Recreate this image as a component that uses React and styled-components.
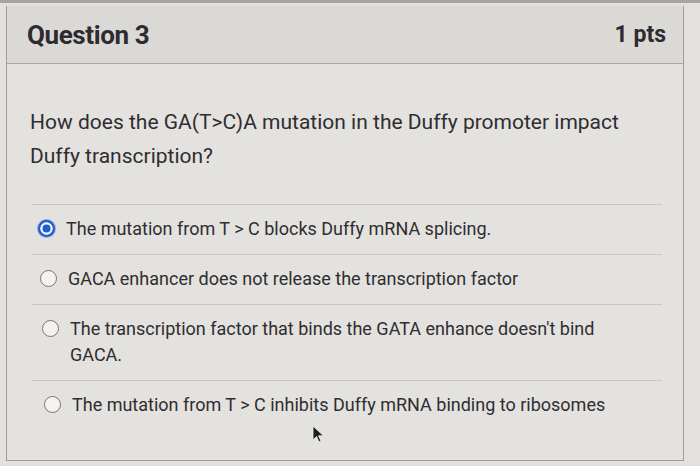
import React from "react";
import styled, { createGlobalStyle } from "styled-components";

const GlobalStyle = createGlobalStyle`
  html, body {
    margin: 0;
    padding: 0;
    background: #e3e1dd;
    font-family: Roboto, "Liberation Sans", sans-serif;
    color: #2f2d31;
  }
`;

const answers = [
  { id: 1, text: "The mutation from T > C blocks Duffy mRNA splicing.", checked: true },
  { id: 2, text: "GACA enhancer does not release the transcription factor" },
  { id: 3, text: "The transcription factor that binds the GATA enhance doesn't bind GACA." },
  { id: 4, text: "The mutation from T > C inhibits Duffy mRNA binding to ribosomes" },
];

const Page = styled.div`
  height: 466px;
  padding-top: 3px;
  box-sizing: border-box;
  border-top: 3px solid #a6a5a3;
  overflow: hidden;
`;

const Card = styled.div`
  position: relative;
  margin: 0 16px 0 6px;
  height: 455px;
  box-sizing: border-box;
  border: 1px solid #9f9d9a;
  border-top: none;
  background: #e4e2de;
`;

const Header = styled.div`
  display: flex;
  justify-content: space-between;
  align-items: center;
  height: 57px;
  padding: 0 17px 0 20px;
  background: #dbd9d5;
  border-bottom: 1px solid #a9a7a4;
`;

const Title = styled.div`
  font-size: 26px;
  font-weight: 700;
  letter-spacing: -0.4px;
  color: #2d2b30;
`;

const Points = styled.div`
  font-size: 23px;
  font-weight: 700;
  color: #2d2b30;
`;

const Body = styled.div`
  padding: 41px 21px 0 23px;
`;

const QuestionText = styled.p`
  margin: 0 0 31px 0;
  font-size: 21px;
  line-height: 34px;
  max-width: 640px;
`;

const AnswerList = styled.div`
  display: flex;
  flex-direction: column;
  margin-left: 2px;
`;

const Answer = styled.label`
  display: flex;
  align-items: flex-start;
  gap: 11px;
  padding: 11px 0 12px ${(p) => p.indent}px;
  border-top: 1px solid #c9c7c3;
  font-size: 18px;
  line-height: 26px;
`;

const Radio = styled.span`
  flex: none;
  width: 17px;
  height: 17px;
  margin-top: 4px;
  border-radius: 50%;
  box-sizing: border-box;
  background: ${(p) => (p.checked ? "#1d5ed8" : "#f4f3f1")};
  border: ${(p) => (p.checked ? "2px solid #1d5ed8" : "1.5px solid #767573")};
  box-shadow: ${(p) => (p.checked ? "inset 0 0 0 2.5px #f4f3f1, 0 0 0 1px #9aa9c8" : "none")};
`;

const AnswerText = styled.span`
  max-width: 560px;
`;

const Cursor = styled.svg`
  position: absolute;
  left: 305px;
  top: 419px;
`;

const indents = [6, 8, 10, 12];

export default function App() {
  return (
    <>
      <GlobalStyle />
      <Page>
        <Card>
          <Header>
            <Title>Question 3</Title>
            <Points>1 pts</Points>
          </Header>
          <Body>
            <QuestionText>
              How does the GA(T&gt;C)A mutation in the Duffy promoter impact Duffy transcription?
            </QuestionText>
            <AnswerList>
              {answers.map((a, i) => (
                <Answer key={a.id} indent={indents[i]}>
                  <Radio checked={a.checked} />
                  <AnswerText>{a.text}</AnswerText>
                </Answer>
              ))}
            </AnswerList>
          </Body>
          <Cursor width="14" height="18" viewBox="0 0 14 18">
            <path d="M1 1 L1 15 L4.5 11.5 L7 17 L9 16 L6.5 10.8 L11.5 10.8 Z" fill="#1e1e22" stroke="#f2f2f2" strokeWidth="0.8" />
          </Cursor>
        </Card>
      </Page>
    </>
  );
}
